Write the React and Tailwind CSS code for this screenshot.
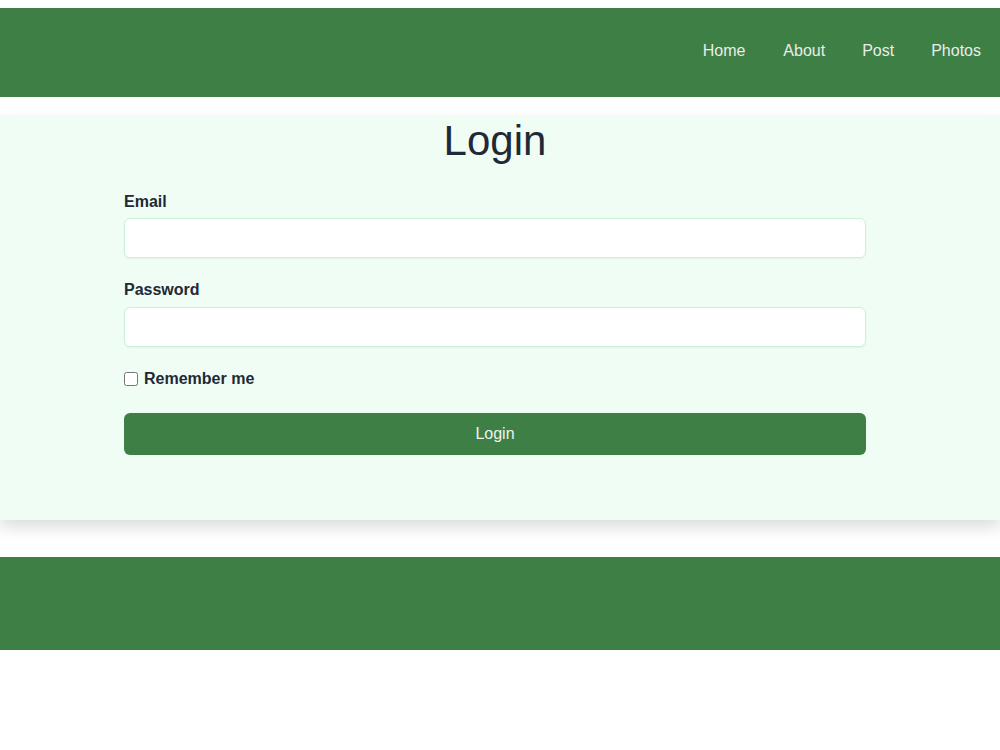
export default function App() {
  const font = { fontFamily: '"Liberation Sans", Arial, Helvetica, sans-serif' };
  return (
    <div className="min-h-[750px] bg-white pt-[8px]" style={font}>
      <header className="h-[89px] bg-[#3e7f46] flex items-center justify-end pr-[19px] pb-[4px]">
        <nav className="flex items-center gap-[37px] text-[16px] text-[#e8eee8]">
          <a href="#" className="mr-[1px]">Home</a>
          <a href="#">About</a>
          <a href="#">Post</a>
          <a href="#">Photos</a>
        </nav>
      </header>
      <main className="mt-[18px] h-[405px] bg-[#f0fdf4] shadow-[0_8px_14px_rgba(0,0,0,0.13)] pr-[10px]">
        <h1 className="text-center text-[42px] leading-[52px] text-[#1f2937]">Login</h1>
        <form className="w-[742px] ml-[124px] mt-[23px]" onSubmit={(e) => e.preventDefault()}>
          <div className="mb-[20px]">
            <label className="block text-[16px] leading-[24px] font-bold text-[#1f2937] mb-[4px]">Email</label>
            <input type="email" className="block w-full h-[40px] rounded-[6px] bg-white border border-[#c9f3d6] shadow-[0_1px_2px_rgba(0,0,0,0.05)] outline-none px-3" />
          </div>
          <div className="mb-[20px]">
            <label className="block text-[16px] leading-[24px] font-bold text-[#1f2937] mb-[5px]">Password</label>
            <input type="password" className="block w-full h-[40px] rounded-[6px] bg-white border border-[#c9f3d6] shadow-[0_1px_2px_rgba(0,0,0,0.05)] outline-none px-3" />
          </div>
          <div className="flex items-center h-[24px] mb-[22px]">
            <input type="checkbox" className="m-0 mr-[6px] w-[14px] h-[14px]" />
            <span className="text-[16px] font-bold text-[#1f2937]">Remember me</span>
          </div>
          <button type="submit" className="w-full h-[42px] rounded-[6px] bg-[#3e7f46] text-[16px] text-[#eef3ee]">Login</button>
        </form>
      </main>
      <footer className="mt-[37px] h-[93px] bg-[#3e7f46]"></footer>
    </div>
  );
}
